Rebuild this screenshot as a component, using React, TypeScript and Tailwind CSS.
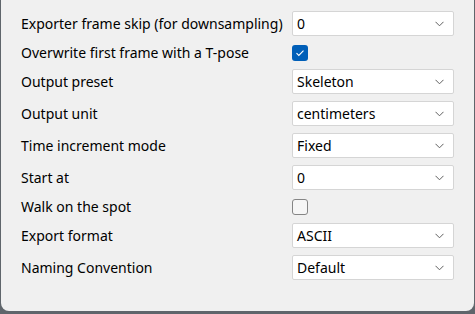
import React from 'react'

type Row =
  | { label: string; kind: 'combo'; value: string }
  | { label: string; kind: 'check'; checked: boolean }

const rows: Row[] = [
  { label: 'Exporter frame skip (for downsampling)', kind: 'combo', value: '0' },
  { label: 'Overwrite first frame with a T-pose', kind: 'check', checked: true },
  { label: 'Output preset', kind: 'combo', value: 'Skeleton' },
  { label: 'Output unit', kind: 'combo', value: 'centimeters' },
  { label: 'Time increment mode', kind: 'combo', value: 'Fixed' },
  { label: 'Start at', kind: 'combo', value: '0' },
  { label: 'Walk on the spot', kind: 'check', checked: false },
  { label: 'Export format', kind: 'combo', value: 'ASCII' },
  { label: 'Naming Convention', kind: 'combo', value: 'Default' },
]

function Chevron() {
  return (
    <svg width="9" height="6" viewBox="0 0 9 6" className="shrink-0">
      <path d="M0.5 0.8 L4.5 4.8 L8.5 0.8" fill="none" stroke="#5f5f5f" strokeWidth="1" />
    </svg>
  )
}

function Combo({ value }: { value: string }) {
  return (
    <div className="h-[25px] w-[162px] flex items-center justify-between bg-white border border-[#d5d5d5] rounded-[2px] pl-[4px] pr-[9px]">
      <span className="leading-none">{value}</span>
      <Chevron />
    </div>
  )
}

function Check({ checked }: { checked: boolean }) {
  if (checked) {
    return (
      <div className="w-4 h-4 rounded-[3px] bg-[#005fb8] flex items-center justify-center">
        <svg width="10" height="8" viewBox="0 0 10 8">
          <path d="M1.5 4.2 L3.8 6.4 L8.5 1.6" fill="none" stroke="white" strokeWidth="1.1" />
        </svg>
      </div>
    )
  }
  return <div className="w-4 h-4 rounded-[3px] border border-[#858585] bg-[#f6f6f6]" />
}

export default function App() {
  return (
    <div className="w-[475px] h-[314px] bg-[#5f656b] flex">
      <div
        className="ml-[1px] w-[473px] h-[311px] bg-[#f0f0f0] rounded-b-[8px] pl-[20px] pt-[11px] flex flex-col gap-[7px] text-[14px] text-black"
        style={{ fontFamily: '"Noto Sans", "Open Sans", sans-serif' }}
      >
        {rows.map((r) => (
          <div
            key={r.label}
            className={`flex items-center ${r.kind === 'combo' ? 'h-[25px]' : 'h-[19px]'}`}
          >
            <div className="w-[271px] leading-none whitespace-nowrap">{r.label}</div>
            {r.kind === 'combo' ? <Combo value={r.value} /> : <Check checked={r.checked} />}
          </div>
        ))}
      </div>
    </div>
  )
}
